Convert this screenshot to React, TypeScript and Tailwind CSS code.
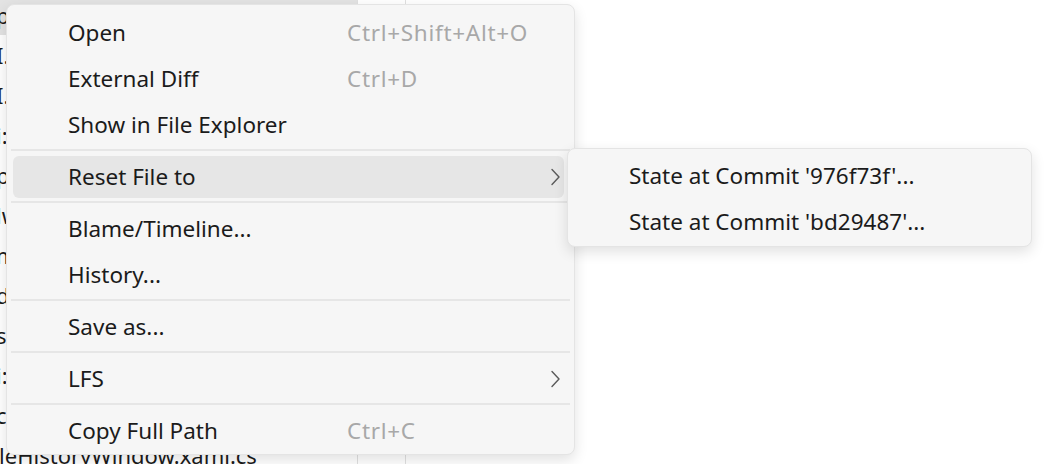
type Entry =
  | { kind: 'item'; label: string; shortcut?: string; submenu?: boolean; active?: boolean }
  | { kind: 'sep' };

const menu: Entry[] = [
  { kind: 'item', label: 'Open', shortcut: 'Ctrl+Shift+Alt+O' },
  { kind: 'item', label: 'External Diff', shortcut: 'Ctrl+D' },
  { kind: 'item', label: 'Show in File Explorer' },
  { kind: 'sep' },
  { kind: 'item', label: 'Reset File to', submenu: true, active: true },
  { kind: 'sep' },
  { kind: 'item', label: 'Blame/Timeline...' },
  { kind: 'item', label: 'History...' },
  { kind: 'sep' },
  { kind: 'item', label: 'Save as...' },
  { kind: 'sep' },
  { kind: 'item', label: 'LFS', submenu: true },
  { kind: 'sep' },
  { kind: 'item', label: 'Copy Full Path', shortcut: 'Ctrl+C' },
];

// rows of the file list behind the menu; only their first letters peek out
const files = [
  'App.xaml',
  'AI.cs',
  'AI.xaml',
  'Ai:',
  'Apo',
  'Alw',
  'Ammm',
  'Ad.',
  'Ass',
  'Ai:',
  'Ac-',
  'FileHistoryWindow.xaml.cs',
];

function Chevron() {
  return (
    <svg width="12" height="18" viewBox="0 0 12 18" fill="none">
      <path d="M3 1.5 L10 9 L3 16.5" stroke="#5a5a5a" strokeWidth="1.4" strokeLinecap="round" strokeLinejoin="round" />
    </svg>
  );
}

export default function App() {
  return (
    <div className="relative w-[1062px] h-[464px] overflow-hidden bg-white font-['Noto_Sans',sans-serif] text-[#1b1b1b]">
      {/* background: file list behind the menu */}
      <div className="flex h-full">
        <div className="w-[357px] flex flex-col -mt-[5px]">
          {files.map((f, i) => (
            <div
              key={i}
              className={`h-[40px] shrink-0 flex items-center whitespace-nowrap text-[22px] ${i === 0 ? 'bg-[#e3e3e3]' : ''}`}
            >
              <span className="-ml-[18px]">{f}</span>
            </div>
          ))}
        </div>
        <div className="w-px h-full bg-[#e0e0e0]" />
        <div className="w-[47px]" />
        <div className="w-px h-full bg-[#e0e0e0]" />
      </div>

      {/* context menu */}
      <div className="absolute left-[6px] top-[4px] w-[569px] h-[451px] rounded-[8px] bg-[#f6f6f6] border border-[#e4e4e4] shadow-[0_5px_14px_rgba(0,0,0,0.12)] pt-[5px]">
        {menu.map((e, i) =>
          e.kind === 'sep' ? (
            <div key={i} className="h-[6px] px-[4px] pt-px">
              <div className="h-[2px] bg-[#e6e6e6]" />
            </div>
          ) : (
            <div key={i} className="h-[46px] py-[2px] pl-[6px] pr-[10px]">
              <div
                className={`h-full rounded-[6px] flex items-center text-[22.5px] ${e.active ? 'bg-[#e6e6e6]' : ''}`}
              >
                <span className="pl-[55px] w-[334px] whitespace-nowrap">{e.label}</span>
                <span className="flex-1 text-[#a8a8a8] tracking-[0.7px] whitespace-nowrap">{e.shortcut}</span>
                {e.submenu && (
                  <span className="pr-[3px] flex items-center">
                    <Chevron />
                  </span>
                )}
              </div>
            </div>
          ),
        )}
      </div>

      {/* submenu */}
      <div className="absolute left-[567px] top-[148px] w-[465px] h-[99px] rounded-[8px] bg-[#f6f6f6] border border-[#e4e4e4] shadow-[0_5px_14px_rgba(0,0,0,0.12)] pt-[4px]">
        {["State at Commit '976f73f'...", "State at Commit 'bd29487'..."].map((s) => (
          <div key={s} className="h-[46px] flex items-center pl-[61px] text-[22.5px] whitespace-nowrap">
            {s}
          </div>
        ))}
      </div>
    </div>
  );
}
